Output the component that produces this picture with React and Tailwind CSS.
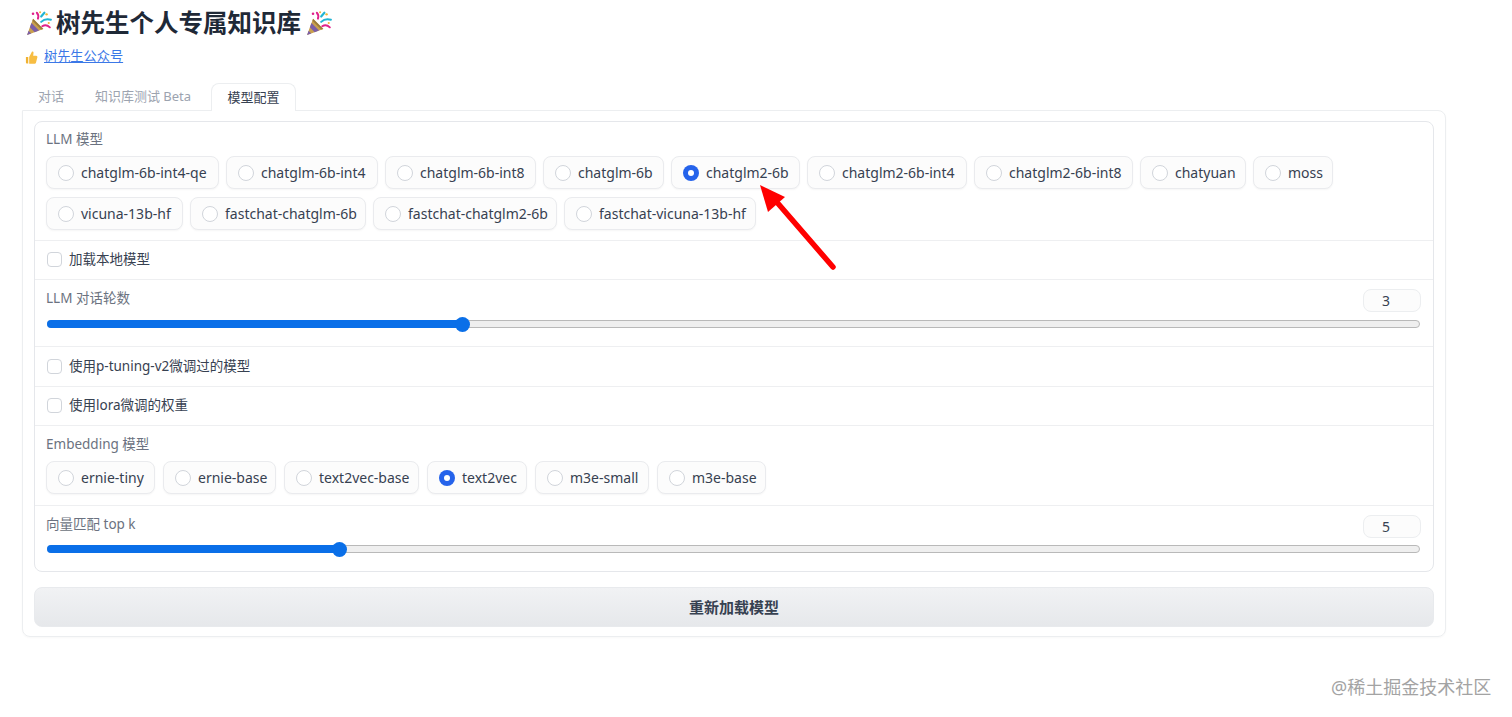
const Popper = ({ className }) => (
  <svg viewBox="0 0 24 24" className={className}>
    <path d="M1 23 L6.5 8 L16 17.5 Z" fill="#c9a04e" />
    <path d="M3.6 16 L5 12 L12 19 L8 20.6 Z" fill="#7a5ea8" />
    <path d="M1 23 L2.4 19.2 L4.8 21.6 Z" fill="#7a5ea8" />
    <path d="M6.5 8 L16 17.5 L14 18 L6 10 Z" fill="#9a7b3a" />
    <path d="M11 8 C12 5 11 3.5 10 2.5" stroke="#e0218a" strokeWidth="1.8" fill="none" strokeLinecap="round" />
    <path d="M14 11 C17 8 20 8 23 9" stroke="#23b5d3" strokeWidth="1.8" fill="none" strokeLinecap="round" />
    <path d="M15 15 C18 13 20 14 22 16" stroke="#e0218a" strokeWidth="1.8" fill="none" strokeLinecap="round" />
    <path d="M14 6 L17 2.5" stroke="#23b5d3" strokeWidth="2" strokeLinecap="round" />
    <circle cx="6.5" cy="3.5" r="1.2" fill="#e0218a" />
    <circle cx="19" cy="4" r="1.1" fill="#f2b632" />
    <circle cx="21" cy="12" r="1" fill="#f2b632" />
    <circle cx="13" cy="2" r="0.9" fill="#f2b632" />
  </svg>
);

const Thumb = () => (
  <svg viewBox="0 0 14 16" className="h-[15px] w-[13px]">
    <path d="M1 7.5 h2.5 v7 H2 a1 1 0 0 1-1-1 Z" fill="#f0b232" />
    <path d="M4.5 7.5 L7 2.5 C7.3 1.4 9 1.2 9.2 2.8 L8.8 6 H12 c1.4 0 1.6 1.4 1.2 2.2 L11.8 13.6 c-.2.7-.7 1-1.4 1 H4.5 Z" fill="#f7bd42" />
  </svg>
);

const Chip = ({ label, w, checked }) => (
  <label
    style={{ width: w }}
    className="flex h-[33px] items-center gap-[7px] rounded-lg border border-[#eaebee] bg-[#fcfcfc] pl-[11px] text-[14px] text-[#374151] shadow-[0_1px_2px_rgba(0,0,0,0.04)]"
  >
    {checked ? (
      <span className="flex h-[16px] w-[16px] shrink-0 items-center justify-center rounded-full bg-[#2563eb]">
        <span className="h-[6px] w-[6px] rounded-full bg-white" />
      </span>
    ) : (
      <span className="h-[16px] w-[16px] shrink-0 rounded-full border border-[#d1d5db] bg-white" />
    )}
    <span className="whitespace-nowrap">{label}</span>
  </label>
);

const Check = ({ label, tall }) => (
  <div
    className={`flex items-center gap-[7px] border-b border-[#eeeff1] pl-[12px] text-[13.5px] text-[#374151] ${
      tall ? "h-[40px]" : "h-[39px] pb-px"
    }`}
  >
    <span className="h-[15px] w-[15px] rounded-[4px] border border-[#d1d5db] bg-white" />
    <span>{label}</span>
  </div>
);

const Slider = ({ label, value, pct, last }) => (
  <div className={`px-[12px] ${last ? "h-[65px]" : "h-[67px] border-b border-[#eeeff1]"}`}>
    <div className="flex h-[37px] items-start justify-between pt-[9px]">
      <span className="-ml-px text-[13.5px] leading-[18px] text-[#6b7280]">{label}</span>
      <span className="flex h-[23px] w-[58px] items-center rounded-lg border border-[#eceef0] bg-[#fcfcfc] pl-[18px] text-[14px] text-[#374151]">
        {value}
      </span>
    </div>
    <div
      className={`relative mr-px h-[8px] rounded-full border border-[#b9b9b9] bg-[#efefef] ${
        last ? "mt-[2px]" : "mt-[3px]"
      }`}
    >
      <div style={{ width: pct }} className="absolute -top-px -left-px h-[8px] rounded-full bg-[#0a6fe8]" />
      <div style={{ left: pct }} className="absolute -top-[4.5px] -ml-[7.5px] h-[15px] w-[15px] rounded-full bg-[#0a6fe8]" />
    </div>
  </div>
);

const row1 = [
  ["chatglm-6b-int4-qe", 173],
  ["chatglm-6b-int4", 152],
  ["chatglm-6b-int8", 151],
  ["chatglm-6b", 121],
  ["chatglm2-6b", 129, true],
  ["chatglm2-6b-int4", 160],
  ["chatglm2-6b-int8", 159],
  ["chatyuan", 106],
  ["moss", 80],
];
const row2 = [
  ["vicuna-13b-hf", 137],
  ["fastchat-chatglm-6b", 176],
  ["fastchat-chatglm2-6b", 184],
  ["fastchat-vicuna-13b-hf", 192],
];
const emb = [
  ["ernie-tiny", 109],
  ["ernie-base", 113],
  ["text2vec-base", 135],
  ["text2vec", 100, true],
  ["m3e-small", 114],
  ["m3e-base", 109],
];

export default function App() {
  return (
    <div
      className="relative h-[717px] w-[1512px] overflow-hidden bg-white"
      style={{ fontFamily: '"Noto Sans", "Noto Sans CJK SC", sans-serif' }}
    >
      <div className="px-[22px]">
        <h1 className="flex h-[46px] items-center pl-[4px] text-[24.5px] font-bold text-[#1f2937]">
          <Popper className="mr-[4px] h-[26px] w-[26px]" />
          <span>树先生个人专属知识库</span>
          <Popper className="ml-[5px] h-[26px] w-[26px]" />
        </h1>
        <div className="flex h-[22px] items-center pl-[3px] text-[13.2px]">
          <Thumb />
          <a className="ml-[6px] text-[#3b78e7] underline">树先生公众号</a>
        </div>
        <div className="mt-[14px] flex h-[28px] items-end text-[13px] text-[#9ca3af]">
          <div className="flex h-[27px] w-[58px] items-center justify-center">对话</div>
          <div className="flex h-[27px] w-[126px] items-center justify-center">知识库测试 Beta</div>
          <div className="relative top-px ml-[5px] flex h-[28px] w-[85px] items-center justify-center rounded-t-lg border border-b-0 border-[#eceef0] bg-white text-[#374151]">
            模型配置
          </div>
        </div>
        <div className="h-[527px] w-[1424px] rounded-b-lg rounded-tr-lg border border-[#eceef0] px-[11px] pt-[10px] shadow-[0_1px_2px_rgba(0,0,0,0.03)]">
          <div className="h-[451px] w-[1400px] rounded-lg border border-[#e5e7eb]">
            <div className="h-[119px] border-b border-[#eeeff1] px-[11px] pt-[8px]">
              <div className="text-[13.5px] leading-[18px] text-[#6b7280]">LLM 模型</div>
              <div className="mt-[8px] flex flex-wrap gap-x-[7px] gap-y-[8px]">
                {row1.map(([l, w, c]) => (
                  <Chip key={l} label={l} w={w} checked={c} />
                ))}
                {row2.map(([l, w, c]) => (
                  <Chip key={l} label={l} w={w} checked={c} />
                ))}
              </div>
            </div>
            <Check label="加载本地模型" />
            <Slider label="LLM 对话轮数" value="3" pct="30.2%" />
            <Check label="使用p-tuning-v2微调过的模型" tall />
            <Check label="使用lora微调的权重" />
            <div className="h-[80px] border-b border-[#eeeff1] px-[11px] pt-[9px]">
              <div className="text-[13.5px] leading-[18px] text-[#6b7280]">Embedding 模型</div>
              <div className="mt-[8px] flex gap-x-[8px]">
                {emb.map(([l, w, c]) => (
                  <Chip key={l} label={l} w={w} checked={c} />
                ))}
              </div>
            </div>
            <Slider label="向量匹配 top k" value="5" pct="21.25%" last />
          </div>
          <button className="mt-[15px] flex h-[40px] w-[1400px] items-center justify-center rounded-lg border border-[#e8eaed] bg-gradient-to-b from-[#f1f2f4] to-[#e6e8eb] text-[15px] font-semibold text-[#374151]">
            重新加载模型
          </button>
        </div>
      </div>
      <svg className="absolute top-[180px] left-[755px] h-[95px] w-[90px]" viewBox="0 0 90 95">
        <path d="M78 87 L20 20" stroke="#f00" strokeWidth="5.5" strokeLinecap="round" />
        <path d="M5 5 L30 17 L13 32 Z" fill="#f00" />
      </svg>
      <div className="absolute top-[674px] left-[1331px] text-[18px] text-[#a3a3a3]">@稀土掘金技术社区</div>
    </div>
  );
}
